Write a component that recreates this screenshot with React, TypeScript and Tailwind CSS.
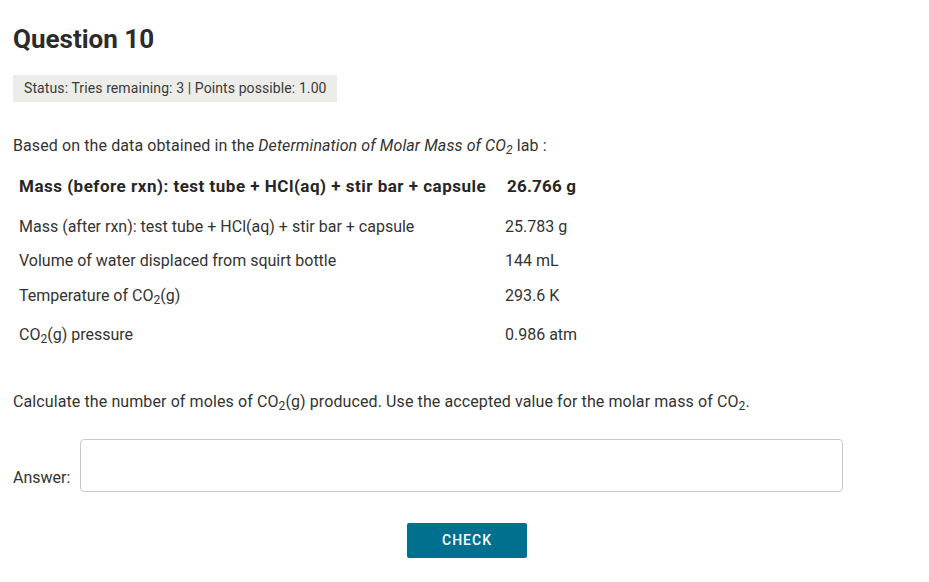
export default function App() {
  const rows: { label: React.ReactNode; value: string; h: string }[] = [
    { label: "Mass (after rxn): test tube + HCl(aq) + stir bar + capsule", value: "25.783 g", h: "h-[36px]" },
    { label: "Volume of water displaced from squirt bottle", value: "144 mL", h: "h-[32px]" },
    {
      label: (
        <>
          Temperature of CO<sub className="text-[12px]">2</sub>(g)
        </>
      ),
      value: "293.6 K",
      h: "h-[38px]",
    },
    {
      label: (
        <>
          CO<sub className="text-[12px]">2</sub>(g) pressure
        </>
      ),
      value: "0.986 atm",
      h: "h-[40px]",
    },
  ];

  return (
    <div className="w-[929px] h-[582px] bg-white text-[#333] font-['Roboto',sans-serif] px-[13px] pt-[23px]">
      <h1 className="text-[26px] font-bold leading-[32px] text-[#2b2b2b]">Question 10</h1>

      <div className="mt-[20px] w-[324px] h-[27px] bg-[#ecede9] pl-[11px] flex items-center text-[14px] tracking-[0.1px] text-[#3a3a3a]">
        Status: Tries remaining: 3 | Points possible: 1.00
      </div>

      <p className="mt-[34px] text-[16px] leading-[20px] tracking-[0.1px]">
        Based on the data obtained in the <i>Determination of Molar Mass of CO<sub className="text-[12px]">2</sub></i> lab :
      </p>

      <table className="mt-[9px] ml-[1px] text-[16px] border-collapse">
        <tbody>
          <tr className="h-[44px]">
            <td className="w-[491px] pl-[5px] font-bold text-[17px] tracking-[0.5px] text-[#262626]">
              Mass (before rxn): test tube + HCl(aq) + stir bar + capsule
            </td>
            <td className="pl-[2px] font-bold text-[17px] tracking-[0.2px] text-[#262626]">26.766 g</td>
          </tr>
          {rows.map((r, i) => (
            <tr key={i} className={r.h}>
              <td className="w-[491px] pl-[5px]">{r.label}</td>
              <td className="pl-0">{r.value}</td>
            </tr>
          ))}
        </tbody>
      </table>

      <p className="mt-[37px] text-[16px] leading-[20px] tracking-[0.1px]">
        Calculate the number of moles of CO<sub className="text-[12px]">2</sub>(g) produced. Use the accepted value for the molar mass of CO<sub className="text-[12px]">2</sub>.
      </p>

      <div className="mt-[27px] flex items-end">
        <label className="text-[16px] w-[67px] pb-[2px]">Answer:</label>
        <input
          type="text"
          className="w-[763px] h-[53px] border border-[#c8c8c8] rounded-[4px] outline-none px-3"
        />
      </div>

      <div className="mt-[31px] flex justify-center">
        <button className="ml-[5px] w-[120px] h-[35px] bg-[#00708f] text-white text-[14px] font-medium tracking-[1px] rounded-[2px]">
          CHECK
        </button>
      </div>
    </div>
  );
}
